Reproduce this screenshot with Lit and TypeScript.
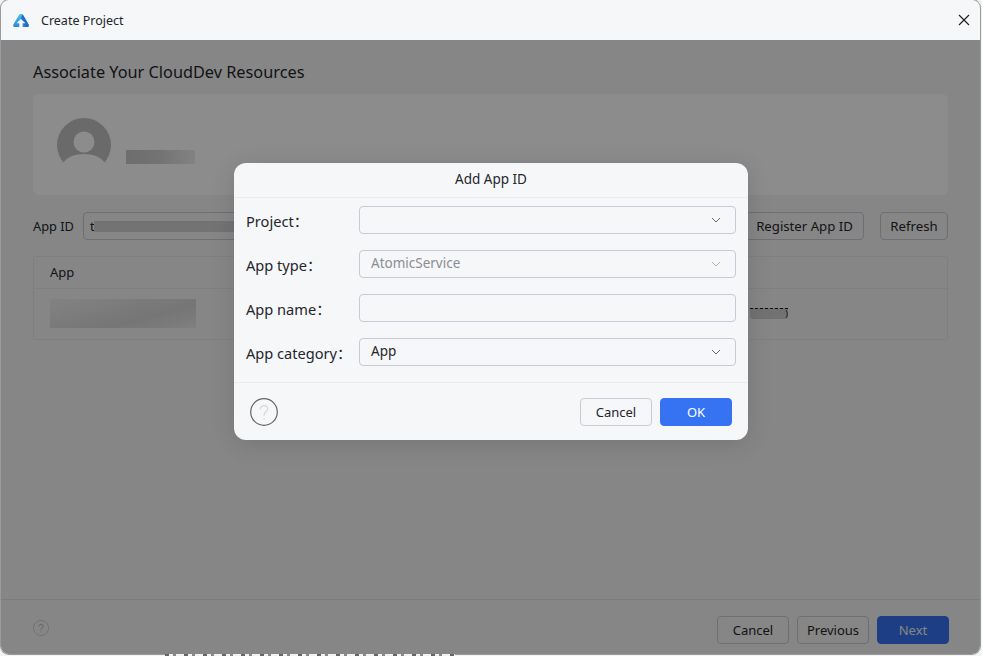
import { LitElement, html, css, svg } from "lit";
import { customElement } from "lit/decorators.js";

const chevron = (muted = false) => html`<svg class="chevron ${muted ? "muted" : ""}" width="10" height="6" viewBox="0 0 10 6">
  <path d="M1 1l4 4 4-4" fill="none" stroke="currentColor" stroke-width="1" />
</svg>`;

const helpIcon = (size: number, cls: string) => html`<svg class=${cls} width=${size} height=${size} viewBox="0 0 28 28">
  <circle cx="14" cy="14" r="13.3" fill="none" stroke="currentColor" stroke-width="1.2" />
  <path class="mark" d="M10.4 11.2c0-2.2 1.6-3.6 3.7-3.6s3.6 1.3 3.6 3.2c0 2.8-3.6 3-3.6 5.9v1" fill="none" stroke-width="1.2" />
  <circle class="dot" cx="14.1" cy="20.8" r="0.8" />
</svg>`;

const logo = svg`
  <defs>
    <linearGradient id="lg" x1="0" y1="0" x2="0" y2="1">
      <stop offset="0" stop-color="#4cc4e8" />
      <stop offset="1" stop-color="#2a86da" />
    </linearGradient>
  </defs>
  <path d="M5.9 1.1C6.9-.4 9.1-.4 10.1 1.1l5.5 9.4c.7 1.1 0 2.5-1.3 2.5H1.7C.4 13-.3 11.6.4 10.5z" fill="url(#lg)" />
  <path d="M9.2.4c.4.2.7.4.9.7l5.5 9.4c.7 1.1 0 2.5-1.3 2.5h-2L8 5z" fill="#1f6cd2" />
  <path d="M8 5l4.5 4.3H9.6V13H6.3V9.3H3.5z" fill="#f6f7f9" />
`;

@customElement("app-root")
export class AppRoot extends LitElement {
  static styles = css`
    :host {
      display: block;
      width: 982px;
      height: 656px;
      overflow: hidden;
      background: #f2f3f4;
      font-family: "Noto Sans", "Noto Sans CJK SC", sans-serif;
      font-size: 14px;
      color: #24262b;
    }

    button {
      font: inherit;
      color: inherit;
      height: 28px;
      padding: 0;
      background: transparent;
      border: 1px solid #c8cad6;
      border-radius: 4px;
    }

    .window {
      width: 979px;
      height: 654px;
      margin-left: 1px;
      display: flex;
      flex-direction: column;
      background: #f6f7f9;
      border-radius: 8px;
      box-shadow: 0 0 0 1px #9a9a9a;
      overflow: hidden;
    }

    .behind {
      width: 290px;
      height: 2px;
      margin-left: 165px;
      background: repeating-linear-gradient(90deg, #666 0 4px, #f2f3f4 4px 8px, #888 8px 11px, #f2f3f4 11px 19px);
    }

    .titlebar {
      flex: none;
      height: 40px;
      display: flex;
      align-items: center;
      padding: 0 10px 0 12px;
      gap: 12px;
      font-size: 12.5px;
    }
    .titlebar .title {
      flex: 1;
    }

    .main {
      flex: 1;
      position: relative;
      display: flex;
      flex-direction: column;
      min-height: 0;
      background: #f5f5f5;
    }

    .page {
      flex: 1;
      padding: 20px 32px 0;
    }
    .heading {
      margin: 0;
      font-size: 16.3px;
      font-weight: 400;
      line-height: 24px;
    }

    .profile {
      margin-top: 10px;
      height: 101px;
      border-radius: 6px;
      background: #ffffff;
      display: flex;
      align-items: center;
      padding-left: 24px;
    }
    .profile .name {
      width: 69px;
      height: 14px;
      margin: 24px 0 0 15px;
      background: linear-gradient(90deg, #c8c8c8, #d0d0d0 45%, #eeeeee);
    }

    .app-id {
      margin-top: 17px;
      display: flex;
      align-items: center;
      font-size: 12.8px;
    }
    .app-id label {
      width: 50px;
    }
    .app-id .input {
      flex: 1;
      height: 28px;
      box-sizing: border-box;
      border: 1px solid #c8cad6;
      border-radius: 4px;
      display: flex;
      align-items: center;
      padding-left: 6px;
      margin-right: 16px;
    }
    .app-id .input i {
      width: 140px;
      height: 11px;
      margin-left: -1px;
      background: #d2d2d2;
    }
    .app-id button {
      font-size: 13.2px;
    }
    .app-id .register {
      width: 119px;
      margin-right: 16px;
    }
    .app-id .refresh {
      width: 68px;
    }

    .table {
      margin-top: 16px;
      height: 84px;
      box-sizing: border-box;
      border: 1px solid #e8e8e8;
      border-radius: 2px;
      display: grid;
      grid-template-rows: 32px 1fr;
      font-size: 13px;
    }
    .table > div {
      padding-left: 16px;
      padding-bottom: 2px;
      display: flex;
      align-items: center;
      justify-content: space-between;
    }
    .table .head {
      border-bottom: 1px solid #e8e8e8;
    }
    .table .blur {
      width: 146px;
      height: 29px;
      background: linear-gradient(165deg, #eeeeee, #d6d6d6 65%, #e8e8e8);
    }
    .table .stamp {
      width: 38px;
      height: 10px;
      margin-right: 159px;
      margin-top: 1px;
      border-top: 1px dashed #111;
      border-radius: 0 0 3px 3px;
      background: #cfcfcf;
      font-size: 9px;
      line-height: 10px;
      text-align: right;
    }

    .footer {
      flex: none;
      height: 55px;
      box-sizing: border-box;
      border-top: 1px solid #e0e0e0;
      padding: 16px 31px 0 32px;
      display: flex;
      align-items: flex-start;
      gap: 8px;
    }
    .footer .spacer {
      flex: 1;
    }
    .footer button {
      width: 72px;
      font-size: 13px;
    }
    .footer .next {
      background: #3672f0;
      border-color: #3672f0;
      color: #f2f2f2;
    }
    .page-help {
      margin-top: 4px;
      color: #bdbdc4;
    }
    .page-help .mark {
      stroke: #8f8f95;
    }
    .page-help .dot {
      fill: #8f8f95;
    }

    .scrim {
      position: absolute;
      inset: 0;
      background: rgba(0, 0, 0, 0.45);
      display: flex;
      justify-content: center;
      align-items: flex-start;
      padding-top: 123px;
    }

    .dialog {
      width: 514px;
      height: 277px;
      margin-left: 1px;
      background: #f6f7f9;
      border-radius: 12px;
      display: flex;
      flex-direction: column;
      box-shadow: 0 4px 24px rgba(0, 0, 0, 0.12);
    }
    .dialog header {
      flex: none;
      height: 35px;
      box-sizing: border-box;
      border-bottom: 1px solid #ebecee;
      padding-bottom: 3px;
      display: flex;
      align-items: center;
      justify-content: center;
      font-size: 13.5px;
    }
    .form {
      flex: 1;
      padding: 8px 12px 0;
      display: flex;
      flex-direction: column;
      gap: 16px;
    }
    .field {
      display: grid;
      grid-template-columns: 113px 1fr;
      align-items: center;
    }
    .field label {
      font-size: 14.6px;
    }
    .control {
      height: 28px;
      box-sizing: border-box;
      border: 1px solid #c8cad6;
      border-radius: 4px;
      display: flex;
      align-items: center;
      justify-content: space-between;
      padding: 0 14px 2px 11px;
      font-size: 13.5px;
    }
    .control.disabled {
      color: #8b8d92;
    }
    .chevron {
      margin-top: 2px;
      color: #66686d;
    }
    .chevron.muted {
      color: #b0b2b7;
    }
    .dialog footer {
      flex: none;
      height: 58px;
      box-sizing: border-box;
      border-top: 1px solid #ebecee;
      padding: 0 16px;
      display: flex;
      align-items: center;
      gap: 8px;
    }
    .dialog footer .spacer {
      flex: 1;
    }
    .dialog footer button {
      width: 72px;
      font-size: 13px;
    }
    .dialog footer .ok {
      background: #3573f2;
      border-color: #3573f2;
      color: #fff;
    }
    .dialog-help {
      color: #626468;
    }
    .dialog-help .mark {
      stroke: #d4d5d8;
    }
    .dialog-help .dot {
      fill: #d4d5d8;
    }
  `;

  render() {
    return html`
      <div class="window">
        <div class="titlebar">
          <svg width="16" height="13" viewBox="0 0 16 13">${logo}</svg>
          <span class="title">Create Project</span>
          <svg width="12" height="12" viewBox="0 0 12 12">
            <path d="M1 1l10 10M11 1L1 11" stroke="#1c1c1e" stroke-width="1.1" />
          </svg>
        </div>
        <div class="main">
          <div class="page">
            <h1 class="heading">Associate Your CloudDev Resources</h1>
            <div class="profile">
              <svg width="54" height="54" viewBox="0 0 54 54">
                <circle cx="27" cy="27" r="27" fill="#c2c2c4" />
                <circle cx="27" cy="24" r="10.5" fill="#ffffff" />
                <path d="M0 54V51L6 45C10 39 18 36 27 36s17 3 21 9l6 6v3z" fill="#ffffff" />
              </svg>
              <div class="name"></div>
            </div>
            <div class="app-id">
              <label>App ID</label>
              <div class="input"><span>t</span><i></i></div>
              <button class="register">Register App ID</button>
              <button class="refresh">Refresh</button>
            </div>
            <div class="table">
              <div class="head">App</div>
              <div><span class="blur"></span><span class="stamp">)</span></div>
            </div>
          </div>
          <div class="footer">
            ${helpIcon(16, "page-help")}
            <span class="spacer"></span>
            <button>Cancel</button>
            <button>Previous</button>
            <button class="next">Next</button>
          </div>
          <div class="scrim">
            <div class="dialog">
              <header>Add App ID</header>
              <div class="form">
                <div class="field">
                  <label>Project：</label>
                  <div class="control"><span></span>${chevron()}</div>
                </div>
                <div class="field">
                  <label>App type：</label>
                  <div class="control disabled"><span>AtomicService</span>${chevron(true)}</div>
                </div>
                <div class="field">
                  <label>App name：</label>
                  <div class="control"></div>
                </div>
                <div class="field">
                  <label>App category：</label>
                  <div class="control"><span>App</span>${chevron()}</div>
                </div>
              </div>
              <footer>
                ${helpIcon(28, "dialog-help")}
                <span class="spacer"></span>
                <button>Cancel</button>
                <button class="ok">OK</button>
              </footer>
            </div>
          </div>
        </div>
      </div>
      <div class="behind"></div>
    `;
  }
}
